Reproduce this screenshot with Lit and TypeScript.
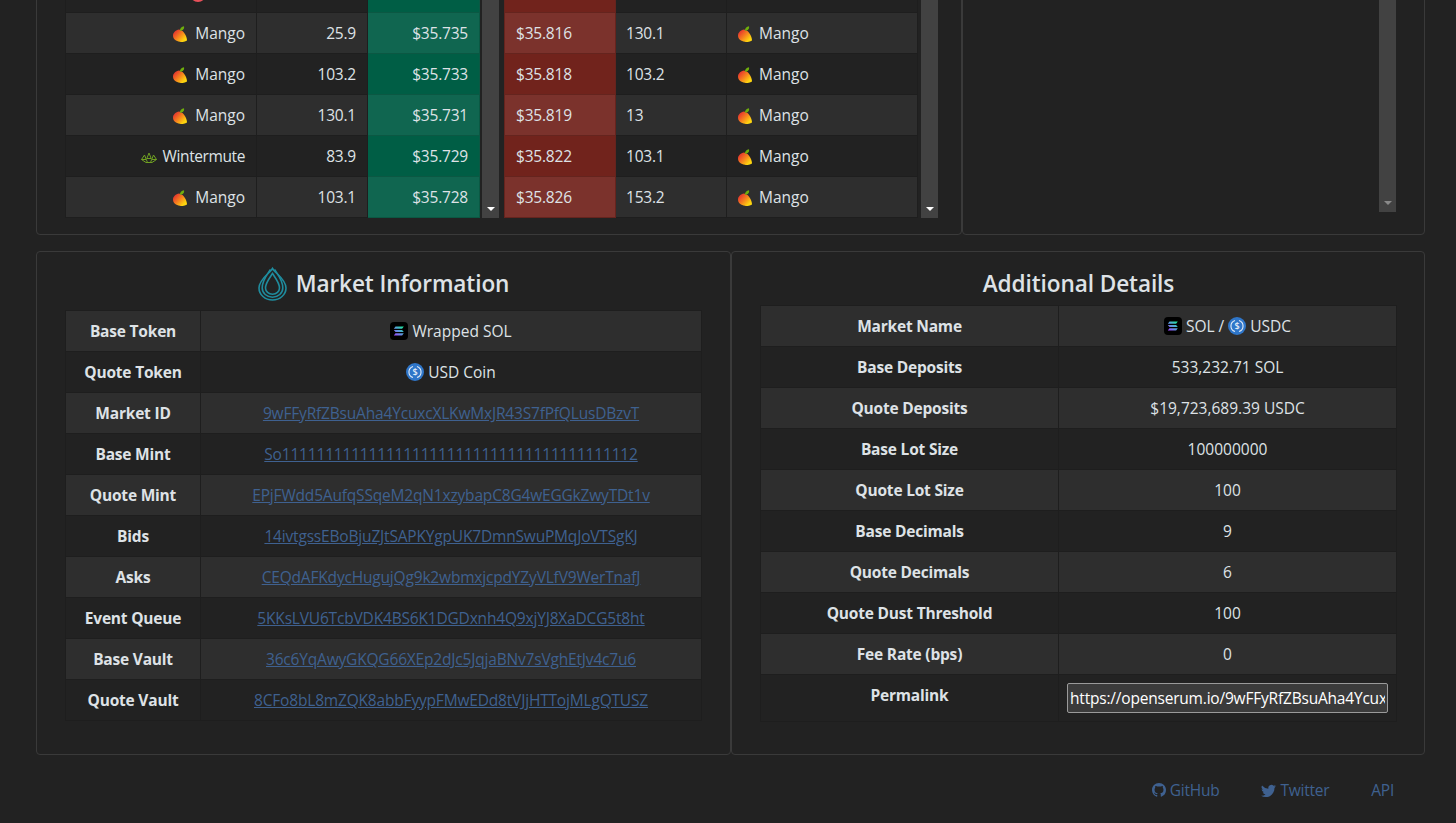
import { LitElement, html, css, svg } from 'lit';
import { customElement } from 'lit/decorators.js';

const mango = html`<svg class="ic" viewBox="0 0 16 16" width="16" height="16">
  <defs><linearGradient id="mg" x1="0.1" y1="0.3" x2="0.8" y2="0.9"><stop offset="0" stop-color="#e8402c"/><stop offset="0.45" stop-color="#f6821e"/><stop offset="0.95" stop-color="#fdd50f"/></linearGradient></defs>
  <path fill="url(#mg)" d="M7 3.500C10 4 12 6 13.500 9 14.500 11 15 13 15 14.500 13 16 10 16.300 8 15.800 4 15.300 1 13 1 9.500 1 6.500 4 4 7 3.500z"/>
  <path fill="#6fae0c" d="M7.800 4.800C7.800 2.500 9.500 .8 12 .3 12.500 2.500 11.300 4.800 7.800 4.800z"/>
</svg>`;

const wintermute = html`<svg class="ic wm" viewBox="0 0 16 11" width="16" height="11" fill="none" stroke="#6f9f22" stroke-width="1">
  <path d="M.5 7.500 3.500 3l1.800 4.500zM15.500 7.500 12.500 3l-1.800 4.500zM5.800 6.500 8 1l2.200 5.500z"/>
  <path d="M.5 7.500 5 10.500h6l4.500-3M5.300 7.500 6.500 10.500M10.700 7.500 9.500 10.500M5.800 6.500h4.400"/>
</svg>`;

const solana = html`<svg class="ic" viewBox="0 0 18 18" width="18" height="18">
  <defs><linearGradient id="sg" x1="0" y1="1" x2="1" y2="0"><stop offset="0" stop-color="#a13fff"/><stop offset="0.5" stop-color="#5a9cdc"/><stop offset="1" stop-color="#14f195"/></linearGradient></defs>
  <rect width="18" height="18" rx="4" fill="#000"/>
  <path fill="url(#sg)" d="M5.500 4.500h8.300l-1.700 2.200H3.800zM3.800 7.900h8.300l1.700 2.200H5.500zM5.500 11.300h8.300l-1.700 2.200H3.800z"/>
</svg>`;

const usdc = html`<svg class="ic" viewBox="0 0 18 18" width="18" height="18">
  <circle cx="9" cy="9" r="9" fill="#2f76c9"/>
  <path fill="none" stroke="#e4edf7" stroke-width="1.100" d="M7 3.400a5.900 5.900 0 0 0 0 11.200M11 3.400a5.900 5.900 0 0 1 0 11.200"/>
  <text x="9" y="12.200" text-anchor="middle" font-size="9" font-weight="600" fill="#e4edf7" font-family="Open Sans, sans-serif">$</text>
</svg>`;

const serum = svg`<path d="M14.500 1.500C12 6 1 12 1 21a13.500 12 0 0 0 27 0C28 12 17 6 14.500 1.500z"/>
  <path d="M12.500 2.500C9 8 4.200 13 4.200 21a10.300 9.200 0 0 0 20.600 0C24.800 13 20 8 16.500 2.500"/>
  <path d="M14.500 6.500C12 10.500 7.500 15.500 7.500 21a7 6.300 0 0 0 14 0C21.500 15.500 17 10.500 14.500 6.500z"/>`;

const github = html`<svg viewBox="0 0 16 16" width="14" height="14" fill="currentColor"><path d="M8 0C3.580 0 0 3.580 0 8c0 3.540 2.290 6.530 5.470 7.590.4.070.55-.17.55-.38 0-.19-.01-.82-.01-1.490-2.010.37-2.530-.49-2.690-.94-.09-.23-.48-.94-.82-1.130-.28-.15-.68-.52-.01-.53.63-.01 1.080.58 1.230.82.72 1.210 1.870.87 2.330.66.070-.52.28-.87.51-1.070-1.780-.2-3.640-.89-3.640-3.950 0-.87.31-1.590.82-2.150-.08-.2-.36-1.020.08-2.120 0 0 .67-.21 2.200.82.64-.18 1.320-.27 2-.27.68 0 1.360.09 2 .27 1.530-1.040 2.200-.82 2.200-.82.44 1.100.16 1.920.08 2.120.51.56.82 1.270.82 2.150 0 3.070-1.870 3.750-3.650 3.950.29.25.54.73.54 1.480 0 1.070-.01 1.930-.01 2.200 0 .21.15.46.55.38A8.013 8.013 0 0016 8c0-4.420-3.580-8-8-8z"/></svg>`;

const twitter = html`<svg viewBox="0 0 16 16" width="15" height="15" fill="currentColor"><path d="M5.026 15c6.038 0 9.341-5.003 9.341-9.334 0-.14 0-.282-.006-.422A6.685 6.685 0 0 0 16 3.542a6.658 6.658 0 0 1-1.889.518 3.301 3.301 0 0 0 1.447-1.817 6.533 6.533 0 0 1-2.087.793A3.286 3.286 0 0 0 7.875 6.030a9.325 9.325 0 0 1-6.767-3.429 3.289 3.289 0 0 0 1.018 4.382A3.323 3.323 0 0 1 .64 6.575v.045a3.288 3.288 0 0 0 2.632 3.218 3.203 3.203 0 0 1-.865.115 3.230 3.230 0 0 1-.614-.057 3.283 3.283 0 0 0 3.067 2.277A6.588 6.588 0 0 1 .78 13.580a6.320 6.320 0 0 1-.78-.045A9.344 9.344 0 0 0 5.026 15z"/></svg>`;

const bids = [
  ['Mango', '25.9', '$35.735'],
  ['Mango', '103.2', '$35.733'],
  ['Mango', '130.1', '$35.731'],
  ['Wintermute', '83.9', '$35.729'],
  ['Mango', '103.1', '$35.728'],
];

const asks = [
  ['$35.816', '130.1', 'Mango'],
  ['$35.818', '103.2', 'Mango'],
  ['$35.819', '13', 'Mango'],
  ['$35.822', '103.1', 'Mango'],
  ['$35.826', '153.2', 'Mango'],
];

const marketLinks = [
  ['Market ID', '9wFFyRfZBsuAha4YcuxcXLKwMxJR43S7fPfQLusDBzvT'],
  ['Base Mint', 'So11111111111111111111111111111111111111112'],
  ['Quote Mint', 'EPjFWdd5AufqSSqeM2qN1xzybapC8G4wEGGkZwyTDt1v'],
  ['Bids', '14ivtgssEBoBjuZJtSAPKYgpUK7DmnSwuPMqJoVTSgKJ'],
  ['Asks', 'CEQdAFKdycHugujQg9k2wbmxjcpdYZyVLfV9WerTnafJ'],
  ['Event Queue', '5KKsLVU6TcbVDK4BS6K1DGDxnh4Q9xjYJ8XaDCG5t8ht'],
  ['Base Vault', '36c6YqAwyGKQG66XEp2dJc5JqjaBNv7sVghEtJv4c7u6'],
  ['Quote Vault', '8CFo8bL8mZQK8abbFyypFMwEDd8tVJjHTTojMLgQTUSZ'],
];

const details = [
  ['Base Deposits', '533,232.71 SOL'],
  ['Quote Deposits', '$19,723,689.39 USDC'],
  ['Base Lot Size', '100000000'],
  ['Quote Lot Size', '100'],
  ['Base Decimals', '9'],
  ['Quote Decimals', '6'],
  ['Quote Dust Threshold', '100'],
  ['Fee Rate (bps)', '0'],
];

@customElement('app-root')
export class AppRoot extends LitElement {
  static styles = css`
    :host {
      display: block;
      height: 823px;
      overflow: hidden;
      background: #222;
      color: #dee2e6;
      font-family: 'Open Sans', 'Liberation Sans', sans-serif;
      font-size: 15.500px;
    }

    .page {
      padding: 0 31px 0 36px;
    }

    /* the page is scrolled, so the top cards get cut off by this box */
    .top {
      display: grid;
      grid-template-columns: 926px 463px;
      grid-template-rows: 235px;
      align-items: end;
      overflow: hidden;
    }

    .card {
      border: 1px solid #3a3a3a;
      border-radius: 4px;
      box-sizing: border-box;
    }

    .book {
      display: flex;
      height: 300px;
      align-items: flex-end;
      padding: 0 23px 16px 28px;
    }

    .side {
      display: flex;
      height: 300px;
      padding: 0 28px 22px 0;
      justify-content: flex-end;
      align-items: flex-end;
    }

    .scroll {
      flex: none;
      display: flex;
      align-items: flex-end;
      justify-content: center;
      box-sizing: border-box;
      width: 17px;
      height: 260px;
      padding-bottom: 7px;
      background: #424242;
    }

    .arrow {
      width: 0;
      height: 0;
      border-left: 4px solid transparent;
      border-right: 4px solid transparent;
      border-top: 4px solid #fff;
    }

    .side .arrow {
      border-top-color: #8a8a8a;
    }

    .book .scroll {
      margin-left: 2px;
    }

    .book .bid-bar {
      margin-right: 5px;
    }

    .book .ask-bar {
      margin-left: 3px;
    }

    table {
      border-collapse: collapse;
      table-layout: fixed;
    }

    td {
      box-sizing: border-box;
      height: 41px;
      padding: 0 11px;
      border: 1px solid #1e1e1e;
      white-space: nowrap;
      overflow: hidden;
    }

    tr:nth-child(odd) td {
      background: #2e2e2e;
    }

    tr:nth-child(even) td {
      background: #222;
    }

    .orders {
      flex: none;
      width: 415px;
    }

    .orders.sell {
      width: 414px;
    }

    .sell td {
      padding-left: 10px;
    }

    .sell td.ask {
      padding-left: 11px;
    }

    .sell .who {
      margin-left: 6px;
    }

    /* first row of the book is the clipped one, so the stripes flip here */
    .orders tr:nth-child(even) td {
      background: #2e2e2e;
    }

    .orders tr:nth-child(odd) td {
      background: #222;
    }

    .col-name {
      width: 191px;
    }

    .col-num {
      width: 111px;
    }

    .orders .r {
      text-align: right;
    }

    .num {
      letter-spacing: -0.2px;
    }

    .orders td.bid {
      border-color: #0b5843;
    }

    .orders td.ask {
      border-color: #65241e;
    }

    .orders tr:nth-child(even) td.bid {
      background: #106650;
    }

    .orders tr:nth-child(odd) td.bid {
      background: #005e45;
    }

    .orders tr:nth-child(even) td.ask {
      background: #7b322c;
    }

    .orders tr:nth-child(odd) td.ask {
      background: #71231c;
    }

    .orders td.cut {
      vertical-align: bottom;
      padding: 0 50px 10px 0;
      line-height: 0;
    }

    .dot {
      display: inline-block;
      width: 16px;
      height: 16px;
      border-radius: 50%;
      background: #e8505a;
    }

    .ic {
      vertical-align: -3px;
    }

    .wm {
      vertical-align: -1px;
    }

    .who {
      margin-left: 7px;
    }

    .long {
      margin-left: 6px;
      letter-spacing: -0.4px;
    }

    .bottom {
      display: grid;
      grid-template-columns: 695px 694px;
      height: 504px;
      margin-top: 16px;
    }

    .panel {
      padding: 0 28px;
    }

    .extra {
      padding-right: 27px;
    }

    h2 {
      display: flex;
      box-sizing: border-box;
      justify-content: center;
      align-items: center;
      gap: 9px;
      margin: 0;
      font-size: 22.600px;
      font-weight: 600;
      line-height: 32px;
      letter-spacing: -0.1px;
      color: #dee2e6;
    }

    .info h2 {
      height: 58px;
      padding-top: 6px;
    }

    .extra h2 {
      height: 53px;
      padding-top: 11px;
    }

    .kv {
      width: 100%;
      text-align: center;
    }

    .kv .k {
      font-weight: 700;
      letter-spacing: -0.2px;
    }

    .info .k {
      width: 135px;
    }

    .extra .k {
      width: 298px;
    }

    a {
      color: #3f6190;
      letter-spacing: -0.18px;
    }

    .plink td {
      height: 47px;
      vertical-align: top;
      padding-top: 9px;
    }

    .plink td.v {
      padding: 8px;
    }

    input {
      display: block;
      box-sizing: border-box;
      width: 100%;
      height: 30px;
      padding: 0 2px;
      background: #3b3b3b;
      border: 1px solid #9a9a9a;
      border-radius: 2px;
      color: #fff;
      font: inherit;
      letter-spacing: -0.2px;
    }

    .foot {
      display: flex;
      justify-content: flex-end;
      gap: 42px;
      padding: 24px 31px 0 0;
      color: #3f6190;
      letter-spacing: -0.25px;
    }

    .foot span {
      display: flex;
      align-items: center;
      gap: 4px;
    }
  `;

  render() {
    return html`
      <div class="page">
        <div class="top">
          <div class="card book">
            <table class="orders">
              <colgroup><col class="col-name" /><col class="col-num" /><col /></colgroup>
              <tbody>
                <tr>
                  <td class="r cut"><span class="dot"></span></td>
                  <td></td>
                  <td class="bid"></td>
                </tr>
                ${bids.map(
                  ([name, size, price]) => html`<tr>
                    <td class="r">${name === 'Mango' ? mango : wintermute}<span class="who ${name === 'Mango' ? '' : 'long'}">${name}</span></td>
                    <td class="r num">${size}</td>
                    <td class="r num bid">${price}</td>
                  </tr>`
                )}
              </tbody>
            </table>
            <div class="scroll bid-bar"><div class="arrow"></div></div>
            <table class="orders sell">
              <colgroup><col class="col-num" /><col class="col-num" /><col /></colgroup>
              <tbody>
                <tr>
                  <td class="ask"></td>
                  <td></td>
                  <td></td>
                </tr>
                ${asks.map(
                  ([price, size, name]) => html`<tr>
                    <td class="num ask">${price}</td>
                    <td class="num">${size}</td>
                    <td>${mango}<span class="who">${name}</span></td>
                  </tr>`
                )}
              </tbody>
            </table>
            <div class="scroll ask-bar"><div class="arrow"></div></div>
          </div>
          <div class="card side"><div class="scroll"><div class="arrow"></div></div></div>
        </div>

        <div class="bottom">
          <div class="card panel info">
            <h2>
              <svg viewBox="0 0 29 34" width="29" height="34" fill="none" stroke="#1f8c9e" stroke-width="1.600">${serum}</svg>
              Market Information
            </h2>
            <table class="kv">
              <tbody>
                <tr><td class="k">Base Token</td><td>${solana} Wrapped SOL</td></tr>
                <tr><td class="k">Quote Token</td><td>${usdc} USD Coin</td></tr>
                ${marketLinks.map(([k, v]) => html`<tr><td class="k">${k}</td><td><a href="#">${v}</a></td></tr>`)}
              </tbody>
            </table>
          </div>
          <div class="card panel extra">
            <h2>Additional Details</h2>
            <table class="kv">
              <tbody>
                <tr><td class="k">Market Name</td><td>${solana} SOL / ${usdc} USDC</td></tr>
                ${details.map(([k, v]) => html`<tr><td class="k">${k}</td><td>${v}</td></tr>`)}
                <tr class="plink">
                  <td class="k">Permalink</td>
                  <td class="v"><input value="https://openserum.io/9wFFyRfZBsuAha4YcuxcXLKwMxJR43S7fPfQLusDBzvT" /></td>
                </tr>
              </tbody>
            </table>
          </div>
        </div>

        <div class="foot">
          <span>${github} GitHub</span>
          <span>${twitter} Twitter</span>
          <span>API</span>
        </div>
      </div>
    `;
  }
}
